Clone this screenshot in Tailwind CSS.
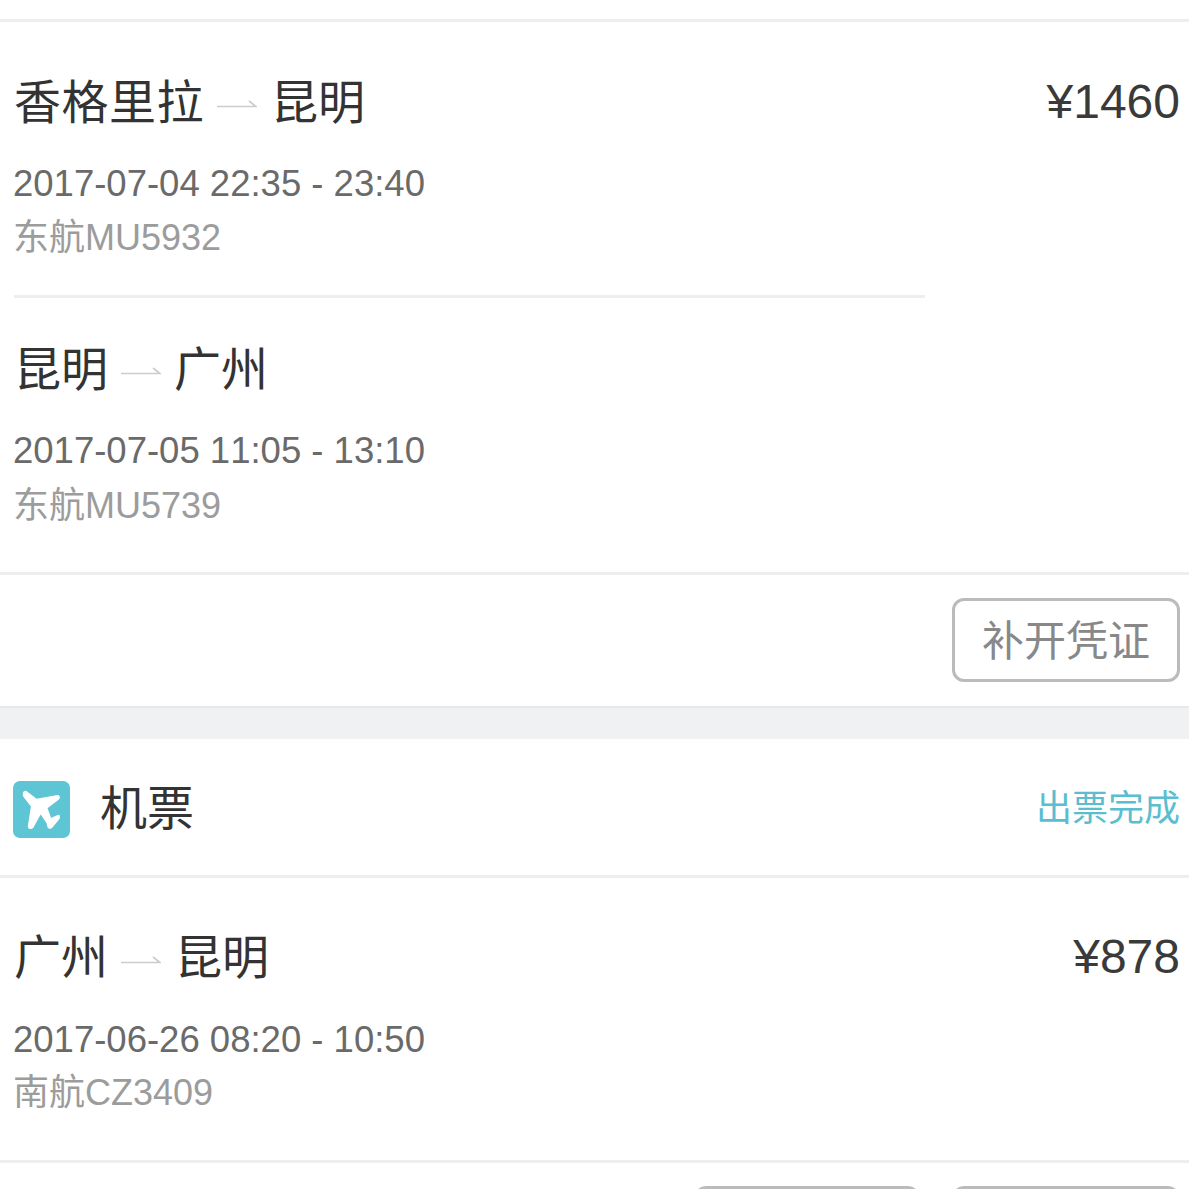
<!DOCTYPE html>
<html lang="zh-CN">
<head>
    <meta charset="UTF-8">
    <meta name="viewport" content="width=device-width, initial-scale=1.0">
    <title>机票订单</title>
    <script src="https://cdn.jsdelivr.net/npm/@tailwindcss/browser@4"></script>
</head>
<body class="bg-white font-['Liberation_Sans','Noto_Sans_CJK_SC',sans-serif] [font-kerning:none]">
<div class="w-[1189px] h-[1189px] overflow-hidden bg-white">

    <div class="h-[19px]"></div>
    <div class="h-[3px] bg-[#eeeeee]"></div>

    <!-- First order -->
    <div class="flex h-[550px] justify-between pr-[9px] pl-[14px]">
        <div class="w-[911px]">
            <div class="h-[276px] border-b-[3px] border-[#eeeeee]">
                <div class="flex h-[158px] items-center pt-[4px] text-[47px] text-[#333333]">
                    <span class="w-[190px] tracking-[0.5px]">香格里拉</span>
                    <svg class="ml-[13px] mr-[14px] mb-[-4px]" width="40" height="10" viewBox="0 0 40 10" fill="none" stroke="#cccccc" stroke-width="1.6"><path d="M0 6.5H39L32 1"/></svg>
                    <span>昆明</span>
                </div>
                <p class="ml-[-1px] mt-[-20px] h-[50px] text-[36.5px] leading-[48px] text-[#6a6a6a]">2017-07-04 22:35 - 23:40</p>
                <p class="ml-[-1px] h-[50px] text-[36px] leading-[56px] text-[#9c9c9c]">东航MU5932</p>
            </div>
            <div>
                <div class="flex h-[142px] items-center pt-[2px] text-[47px] text-[#333333]">
                    <span class="w-[95px]">昆明</span>
                    <svg class="ml-[12px] mr-[13px] mb-[-4px]" width="40" height="10" viewBox="0 0 40 10" fill="none" stroke="#cccccc" stroke-width="1.6"><path d="M0 6.5H39L32 1"/></svg>
                    <span>广州</span>
                </div>
                <p class="ml-[-1px] mt-[-13px] h-[50px] text-[36.5px] leading-[48px] text-[#6a6a6a]">2017-07-05 11:05 - 13:10</p>
                <p class="ml-[-1px] h-[50px] text-[36px] leading-[58px] text-[#9c9c9c]">东航MU5739</p>
            </div>
        </div>
        <p class="pt-[53px] text-[48px] leading-[54px] text-[#3a3a3a]">¥1460</p>
    </div>

    <div class="h-[3px] bg-[#eeeeee]"></div>
    <div class="flex h-[131px] items-center justify-end pr-[9px] pb-[2px]">
        <button class="h-[84px] w-[228px] rounded-[12px] border-[3px] border-[#bbbbbb] pt-[4px] text-center text-[42px] text-[#888888]">补开凭证</button>
    </div>
    <div class="h-[33px] border-t-[2px] border-[#e8e8ea] bg-[#f0f1f3]"></div>

    <!-- Second order -->
    <div class="flex h-[136px] items-center justify-between pt-[5px] pr-[9px] pl-[13px]">
        <div class="flex items-center">
            <div class="h-[57px] w-[57px]">
                <svg width="57" height="57" viewBox="0 0 57 57"><rect width="57" height="57" rx="7" fill="#5dc5d3"/><path fill="#ffffff" stroke="#ffffff" stroke-width="1.5" stroke-linejoin="round" d="M10.500 12C11 10.800 12 10.200 13 10.500L23.500 18.500 44.500 14.800C46 14.700 46.800 16.500 45.500 17.800L33.700 27 37.700 38 45.500 34.500C46.500 34.500 46.500 36.500 45.500 38L38.500 46.500C37.500 47.500 35.500 47 35.200 46L34.300 42 27.700 32 19.700 46.300C18.500 47.800 15.500 47.500 15.500 45.500L18.700 25.300 11.500 16C10.500 15 10.300 13.500 10.500 12Z"/></svg>
            </div>
            <span class="ml-[30px] text-[47px] text-[#333333]">机票</span>
        </div>
        <span class="mt-[-2px] text-[36px] text-[#5bbdd0]">出票完成</span>
    </div>
    <div class="h-[3px] bg-[#eeeeee]"></div>

    <div class="flex h-[282px] justify-between pr-[9px] pl-[14px]">
        <div>
            <div class="flex h-[158px] items-center pt-[3px] text-[47px] text-[#333333]">
                <span class="w-[95px]">广州</span>
                <svg class="ml-[12px] mr-[14px] mb-[-4px]" width="40" height="10" viewBox="0 0 40 10" fill="none" stroke="#cccccc" stroke-width="1.6"><path d="M0 6.5H39L32 1"/></svg>
                <span>昆明</span>
            </div>
            <p class="ml-[-1px] mt-[-20px] h-[50px] text-[36.5px] leading-[48px] text-[#6a6a6a]">2017-06-26 08:20 - 10:50</p>
            <p class="ml-[-1px] h-[50px] text-[36px] leading-[54px] text-[#9c9c9c]">南航CZ3409</p>
        </div>
        <p class="pt-[52px] text-[48px] leading-[54px] text-[#3a3a3a]">¥878</p>
    </div>
    <div class="h-[3px] bg-[#eeeeee]"></div>

    <div class="flex justify-end gap-[32px] pt-[23px] pr-[9px]">
        <button class="h-[85px] w-[226px] rounded-[12px] border-[3px] border-[#bbbbbb]"></button>
        <button class="h-[85px] w-[228px] rounded-[12px] border-[3px] border-[#bbbbbb]"></button>
    </div>
</div>
</body>
</html>
